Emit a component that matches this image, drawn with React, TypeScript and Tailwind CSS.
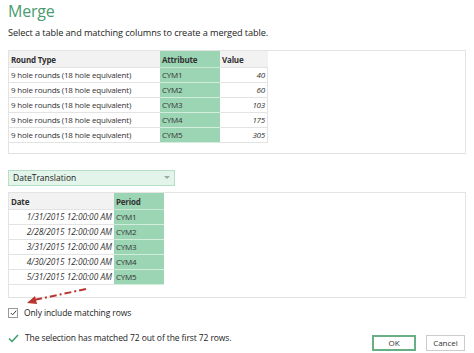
import React from "react";

const rows = [
  ["9 hole rounds (18 hole equivalent)", "CYM1", "40"],
  ["9 hole rounds (18 hole equivalent)", "CYM2", "60"],
  ["9 hole rounds (18 hole equivalent)", "CYM3", "103"],
  ["9 hole rounds (18 hole equivalent)", "CYM4", "175"],
  ["9 hole rounds (18 hole equivalent)", "CYM5", "305"],
];
const dates = [
  ["1/31/2015 12:00:00 AM", "CYM1"],
  ["2/28/2015 12:00:00 AM", "CYM2"],
  ["3/31/2015 12:00:00 AM", "CYM3"],
  ["4/30/2015 12:00:00 AM", "CYM4"],
  ["5/31/2015 12:00:00 AM", "CYM5"],
];

export default function App() {
  return (
    <div
      className="w-[474px] h-[353px] bg-white relative overflow-hidden text-[#333]"
      style={{ fontFamily: '"Open Sans", "Noto Sans", sans-serif' }}
    >
      <div className="px-2">
        <div className="text-[16px] leading-[22px] text-[#4a9b6f] tracking-[-0.2px]">Merge</div>
        <div className="text-[9.2px] leading-[14px] mt-[4px] text-[#222] tracking-[-0.1px]">
          Select a table and matching columns to create a merged table.
        </div>

        <div className="mt-[10px] h-[104px] border border-[#e3e3e3] text-[8px] tracking-[-0.2px]">
          <div className="flex h-[17px] leading-[17px] font-bold">
            <div className="w-[151px] bg-[#f2f2f2] pl-[2px] border-b border-[#e3e3e3]">Round Type</div>
            <div className="w-[60px] bg-[#9cd5b4] pl-[2px] border-b border-[#c9e9d6]">Attribute</div>
            <div className="w-[48px] bg-[#f2f2f2] pl-[2px] border-b border-[#e3e3e3]">Value</div>
          </div>
          {rows.map((r) => (
            <div key={r[1]} className="flex h-[15px] leading-[14px]">
              <div className="w-[151px] pl-[2px] border-b border-[#e3e3e3]">{r[0]}</div>
              <div className="w-[60px] bg-[#9cd5b4] pl-[2px] border-b border-[#d3eddd]">{r[1]}</div>
              <div className="w-[48px] pr-[2px] text-right italic border-b border-r border-[#e3e3e3]">{r[2]}</div>
            </div>
          ))}
        </div>

        <div className="mt-[16px] w-[167px] h-[16px] bg-[#e3f4ea] border border-[#b5dfc6] flex items-center justify-between px-[4px] text-[8.5px]">
          <span className="text-[#222]">DateTranslation</span>
          <svg width="6" height="4" viewBox="0 0 6 4"><path d="M0 0 L6 0 L3 3 Z" fill="#9aa" /></svg>
        </div>

        <div className="mt-[6px] h-[106px] border border-[#e3e3e3] text-[8px]">
          <div className="flex h-[17px] leading-[17px] font-bold tracking-[-0.2px]">
            <div className="w-[105px] bg-[#f2f2f2] pl-[2px] border-b border-[#e3e3e3]">Date</div>
            <div className="w-[50px] bg-[#9cd5b4] pl-[2px] border-b border-[#c9e9d6]">Period</div>
          </div>
          {dates.map((r) => (
            <div key={r[1]} className="flex h-[15px] leading-[14px]">
              <div className="w-[105px] pr-[2px] text-right italic text-[8.3px] border-b border-[#e3e3e3]">{r[0]}</div>
              <div className="w-[50px] bg-[#9cd5b4] pl-[2px] border-b border-[#d3eddd] tracking-[-0.2px]">{r[1]}</div>
            </div>
          ))}
        </div>

        <div className="mt-[9px] h-[12px] flex items-center gap-[6px] text-[8.5px] tracking-[-0.1px]">
          <div className="w-[10px] h-[10px] border border-[#999] flex items-center justify-center bg-white">
            <svg width="7" height="6" viewBox="0 0 7 6"><path d="M0.8 3 L2.6 4.8 L6.2 0.8" stroke="#333" strokeWidth="1" fill="none" /></svg>
          </div>
          <span className="text-[#222]">Only include matching rows</span>
        </div>

        <div className="mt-[11px] flex items-start justify-between">
          <div className="h-[16px] flex items-center gap-[6px] text-[8.5px] tracking-[-0.1px]">
            <svg width="11" height="9" viewBox="0 0 11 9"><path d="M1 4.5 L4 7.5 L10 1" stroke="#3d9a66" strokeWidth="1.5" fill="none" /></svg>
            <span className="text-[#222]">The selection has matched 72 out of the first 72 rows.</span>
          </div>
          <div className="flex gap-[10px] text-[8px] mt-[5px] mr-[1px]">
            <div className="w-[44px] h-[16px] border-2 border-[#6aae86] flex items-center justify-center">OK</div>
            <div className="w-[39px] h-[16px] border border-[#ccc] flex items-center justify-center">Cancel</div>
          </div>
        </div>
      </div>

      <svg className="absolute left-0 top-0" width="474" height="353" viewBox="0 0 474 353">
        <line x1="86" y1="289" x2="34" y2="300" stroke="#b8362e" strokeWidth="2" strokeDasharray="7 3 2 3" />
        <path d="M27 303 L35 296 L37 304 Z" fill="#b8362e" />
      </svg>
    </div>
  );
}
